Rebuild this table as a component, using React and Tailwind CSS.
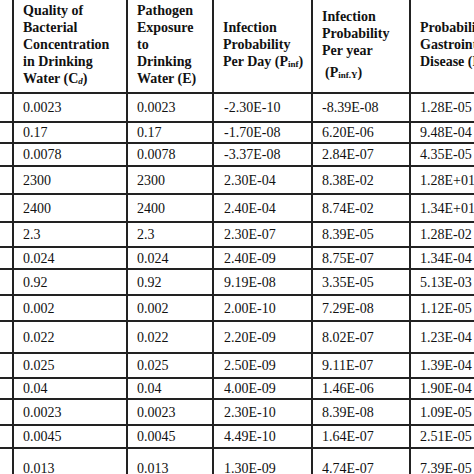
import React from "react";

const rows = [
  ["0.0023", "0.0023", "-2.30E-10", "-8.39E-08", "1.28E-05", "h-[29px]"],
  ["0.17", "0.17", "-1.70E-08", "6.20E-06", "9.48E-04", "h-[21px]"],
  ["0.0078", "0.0078", "-3.37E-08", "2.84E-07", "4.35E-05", "h-[23px]"],
  ["2300", "2300", "2.30E-04", "8.38E-02", "1.28E+01", "h-[28px]"],
  ["2400", "2400", "2.40E-04", "8.74E-02", "1.34E+01", "h-[28px]"],
  ["2.3", "2.3", "2.30E-07", "8.39E-05", "1.28E-02", "h-[25px]"],
  ["0.024", "0.024", "2.40E-09", "8.75E-07", "1.34E-04", "h-[22px]"],
  ["0.92", "0.92", "9.19E-08", "3.35E-05", "5.13E-03", "h-[26px]"],
  ["0.002", "0.002", "2.00E-10", "7.29E-08", "1.12E-05", "h-[26px]"],
  ["0.022", "0.022", "2.20E-09", "8.02E-07", "1.23E-04", "h-[32px]"],
  ["0.025", "0.025", "2.50E-09", "9.11E-07", "1.39E-04", "h-[25px]"],
  ["0.04", "0.04", "4.00E-09", "1.46E-06", "1.90E-04", "h-[21px]"],
  ["0.0023", "0.0023", "2.30E-10", "8.39E-08", "1.09E-05", "h-[26px]"],
  ["0.0045", "0.0045", "4.49E-10", "1.64E-07", "2.51E-05", "h-[23px]"],
  ["0.013", "0.013", "1.30E-09", "4.74E-07", "7.39E-05", "h-[40px]"],
];

const grid = "grid grid-cols-[14px_114px_86px_99px_98px_120px] border-b-2 border-[#222]";
const cell = "border-r-2 border-[#222] flex items-center pl-[9px] overflow-hidden whitespace-nowrap";
const lastCell = "flex items-center pl-[9px] overflow-hidden whitespace-nowrap";

function Sub({ children, italic }) {
  return (
    <sub className={`text-[9px] relative top-[1px] ${italic ? "italic" : ""}`}>{children}</sub>
  );
}

export default function App() {
  return (
    <div
      className="w-[474px] h-[474px] overflow-hidden bg-white text-[#111]"
      style={{ fontFamily: '"Liberation Serif", "Times New Roman", serif' }}
    >
      <div className="w-[531px]">
        <div className={`${grid} h-[94px] font-bold text-[14px] leading-[17px]`}>
          <div className="border-r-2 border-[#222]" />
          <div className={`${cell} pb-[4px]`}>
            <div>
              Quality of<br />Bacterial<br />Concentration<br />in Drinking<br />
              Water (C<Sub italic>d</Sub>)
            </div>
          </div>
          <div className={`${cell} pb-[4px]`}>
            <div>
              Pathogen<br />Exposure<br />to<br />Drinking<br />Water (E)
            </div>
          </div>
          <div className={`${cell} pb-[4px]`}>
            <div>
              Infection<br />Probability<br />Per Day (P<Sub>inf</Sub>)
            </div>
          </div>
          <div className={`${cell} pb-[4px]`}>
            <div>
              Infection<br />Probability<br />Per year
              <div className="pt-[5px] pl-[3px]">
                (P<Sub>inf.Y</Sub>)
              </div>
            </div>
          </div>
          <div className={`${lastCell} pb-[4px]`}>
            <div>
              Probability of<br />Gastrointestinal<br />Disease (P<Sub>ill</Sub>)
            </div>
          </div>
        </div>
        {rows.map((r, i) => (
          <div key={i} className={`${grid} ${r[5]} text-[14px]`}>
            <div className="border-r-2 border-[#222]" />
            <div className={cell}>{r[0]}</div>
            <div className={cell}>{r[1]}</div>
            <div className={`${cell} pl-[10px]`}>{r[2]}</div>
            <div className={cell}>{r[3]}</div>
            <div className={lastCell}>{r[4]}</div>
          </div>
        ))}
      </div>
    </div>
  );
}
